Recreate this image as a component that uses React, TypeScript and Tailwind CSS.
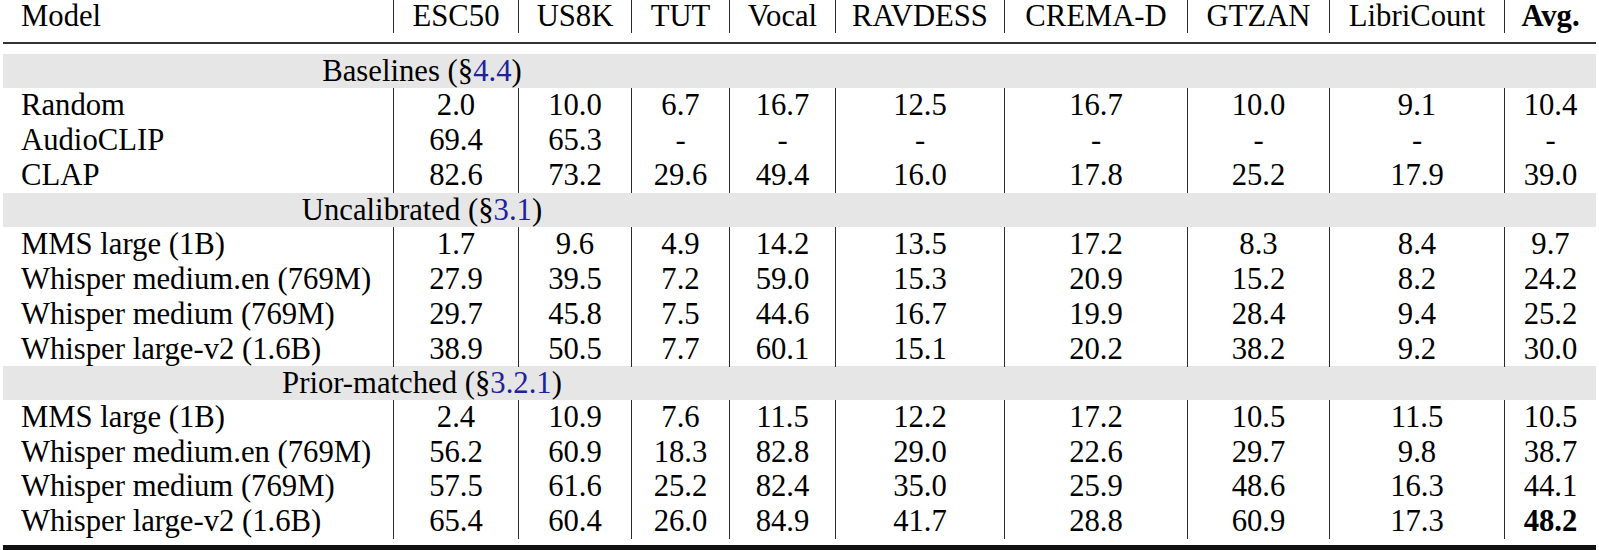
import React from "react";

const COLS =
  "grid grid-cols-[390px_125px_113px_98px_106px_169px_183px_142px_175px_92px]";

type Row = { name: string; vals: string[]; h: number; boldLast?: boolean };

const headers = ["ESC50", "US8K", "TUT", "Vocal", "RAVDESS", "CREMA-D", "GTZAN", "LibriCount"];

const sections: { title: string; ref: string; rows: Row[] }[] = [
  {
    title: "Baselines",
    ref: "4.4",
    rows: [
      { name: "Random", vals: ["2.0", "10.0", "6.7", "16.7", "12.5", "16.7", "10.0", "9.1", "10.4"], h: 35 },
      { name: "AudioCLIP", vals: ["69.4", "65.3", "-", "-", "-", "-", "-", "-", "-"], h: 35 },
      { name: "CLAP", vals: ["82.6", "73.2", "29.6", "49.4", "16.0", "17.8", "25.2", "17.9", "39.0"], h: 35 },
    ],
  },
  {
    title: "Uncalibrated",
    ref: "3.1",
    rows: [
      { name: "MMS large (1B)", vals: ["1.7", "9.6", "4.9", "14.2", "13.5", "17.2", "8.3", "8.4", "9.7"], h: 35 },
      { name: "Whisper medium.en (769M)", vals: ["27.9", "39.5", "7.2", "59.0", "15.3", "20.9", "15.2", "8.2", "24.2"], h: 35 },
      { name: "Whisper medium (769M)", vals: ["29.7", "45.8", "7.5", "44.6", "16.7", "19.9", "28.4", "9.4", "25.2"], h: 35 },
      { name: "Whisper large-v2 (1.6B)", vals: ["38.9", "50.5", "7.7", "60.1", "15.1", "20.2", "38.2", "9.2", "30.0"], h: 34 },
    ],
  },
  {
    title: "Prior-matched",
    ref: "3.2.1",
    rows: [
      { name: "MMS large (1B)", vals: ["2.4", "10.9", "7.6", "11.5", "12.2", "17.2", "10.5", "11.5", "10.5"], h: 35 },
      { name: "Whisper medium.en (769M)", vals: ["56.2", "60.9", "18.3", "82.8", "29.0", "22.6", "29.7", "9.8", "38.7"], h: 34 },
      { name: "Whisper medium (769M)", vals: ["57.5", "61.6", "25.2", "82.4", "35.0", "25.9", "48.6", "16.3", "44.1"], h: 35 },
      { name: "Whisper large-v2 (1.6B)", vals: ["65.4", "60.4", "26.0", "84.9", "41.7", "28.8", "60.9", "17.3", "48.2"], h: 34, boldLast: true },
    ],
  },
];

function DataRow({ row }: { row: Row }) {
  return (
    <div className={COLS} style={{ height: row.h }}>
      <div className="pl-[18px] leading-[35px] whitespace-nowrap">{row.name}</div>
      {row.vals.map((v, i) => (
        <div
          key={i}
          className={
            "border-l border-[#2b2b2b] text-center leading-[35px] whitespace-nowrap" +
            (row.boldLast && i === row.vals.length - 1 ? " font-bold" : "")
          }
        >
          {v}
        </div>
      ))}
    </div>
  );
}

export default function App() {
  return (
    <div className="w-[1599px] h-[550px] bg-white overflow-hidden text-black font-[family-name:'Liberation_Serif','Times_New_Roman',serif] text-[30.7px]">
      <div className="ml-[3px] w-[1593px]">
        {/* header */}
        <div className={COLS + " h-[33px]"}>
          <div className="pl-[18px] leading-[33px]">Model</div>
          {headers.map((h) => (
            <div key={h} className="border-l border-[#2b2b2b] text-center leading-[33px] whitespace-nowrap">
              {h}
            </div>
          ))}
          <div className="border-l border-[#2b2b2b] text-center leading-[33px] font-bold">Avg.</div>
        </div>
        <div className="h-[9px]" />
        <div className="h-[2px] bg-[#333]" />
        <div className="h-[10px]" />
        {sections.map((s) => (
          <div key={s.title}>
            <div className="h-[34px] bg-[#e6e6e6]">
              <div className="w-[838px] text-center leading-[34px] whitespace-nowrap">
                {s.title} (§<span className="text-[#22229a]">{s.ref}</span>)
              </div>
            </div>
            {s.rows.map((r, i) => (
              <DataRow key={i} row={r} />
            ))}
          </div>
        ))}
        <div className="h-[7px]" />
        <div className="h-[8px] bg-[#111]" />
      </div>
    </div>
  );
}
